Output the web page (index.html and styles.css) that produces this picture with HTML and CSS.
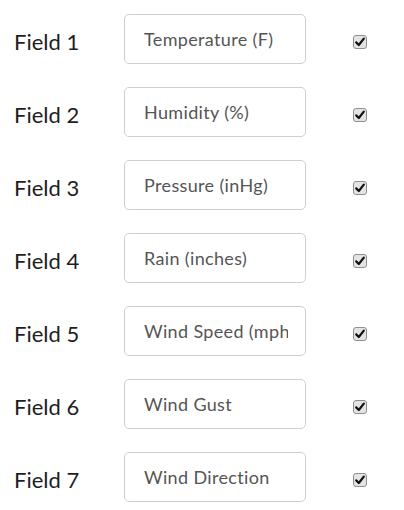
FILE: index.html
```html
<!DOCTYPE html>
<html>
<head>
<meta charset="utf-8">
<link rel="stylesheet" href="styles.css">
</head>
<body>
<form class="fields">
  <div class="row">
    <label class="label">Field 1</label>
    <div class="input"><span class="value">Temperature (F)</span></div>
    <span class="check"><svg viewBox="0 0 14 14" width="14" height="14"><rect x="0.5" y="0.5" width="13" height="13" rx="2.5" class="box"/><path d="M3.2 7.4 L5.8 10 L10.8 3.6" class="tick"/></svg></span>
  </div>
  <div class="row">
    <label class="label">Field 2</label>
    <div class="input"><span class="value">Humidity (%)</span></div>
    <span class="check"><svg viewBox="0 0 14 14" width="14" height="14"><rect x="0.5" y="0.5" width="13" height="13" rx="2.5" class="box"/><path d="M3.2 7.4 L5.8 10 L10.8 3.6" class="tick"/></svg></span>
  </div>
  <div class="row">
    <label class="label">Field 3</label>
    <div class="input"><span class="value">Pressure (inHg)</span></div>
    <span class="check"><svg viewBox="0 0 14 14" width="14" height="14"><rect x="0.5" y="0.5" width="13" height="13" rx="2.5" class="box"/><path d="M3.2 7.4 L5.8 10 L10.8 3.6" class="tick"/></svg></span>
  </div>
  <div class="row">
    <label class="label">Field 4</label>
    <div class="input"><span class="value">Rain (inches)</span></div>
    <span class="check"><svg viewBox="0 0 14 14" width="14" height="14"><rect x="0.5" y="0.5" width="13" height="13" rx="2.5" class="box"/><path d="M3.2 7.4 L5.8 10 L10.8 3.6" class="tick"/></svg></span>
  </div>
  <div class="row">
    <label class="label">Field 5</label>
    <div class="input"><span class="value">Wind Speed (mph)</span></div>
    <span class="check"><svg viewBox="0 0 14 14" width="14" height="14"><rect x="0.5" y="0.5" width="13" height="13" rx="2.5" class="box"/><path d="M3.2 7.4 L5.8 10 L10.8 3.6" class="tick"/></svg></span>
  </div>
  <div class="row">
    <label class="label">Field 6</label>
    <div class="input"><span class="value">Wind Gust</span></div>
    <span class="check"><svg viewBox="0 0 14 14" width="14" height="14"><rect x="0.5" y="0.5" width="13" height="13" rx="2.5" class="box"/><path d="M3.2 7.4 L5.8 10 L10.8 3.6" class="tick"/></svg></span>
  </div>
  <div class="row">
    <label class="label">Field 7</label>
    <div class="input"><span class="value">Wind Direction</span></div>
    <span class="check"><svg viewBox="0 0 14 14" width="14" height="14"><rect x="0.5" y="0.5" width="13" height="13" rx="2.5" class="box"/><path d="M3.2 7.4 L5.8 10 L10.8 3.6" class="tick"/></svg></span>
  </div>
</form>
</body>
</html>
```
FILE: styles.css
```css
html, body {
  margin: 0;
  padding: 0;
  background: #ffffff;
}
body {
  font-family: Lato, "Open Sans", sans-serif;
}
.fields {
  display: flex;
  flex-direction: column;
  gap: 23px;
  padding: 14px 0 0 14px;
}
.row {
  display: grid;
  grid-template-columns: 110px 182px 47px 14px;
  align-items: center;
  height: 50px;
}
.label {
  grid-column: 1;
  font-size: 22px;
  color: #1e1e1e;
  padding-top: 4px;
}
.input {
  grid-column: 2;
  box-sizing: border-box;
  height: 50px;
  border: 1px solid #cfcfcf;
  border-radius: 5px;
  padding: 0 17px 1px 19px;
  display: flex;
  align-items: center;
  font-size: 18px;
  letter-spacing: 0.35px;
  color: #555;
}
.value {
  display: block;
  white-space: nowrap;
  overflow: hidden;
  min-width: 0;
}
.check {
  grid-column: 4;
  display: flex;
  padding-top: 5px;
}
.box {
  fill: #e4e4e4;
  stroke: #8f8f8f;
  stroke-width: 1;
}
.tick {
  fill: none;
  stroke: #111;
  stroke-width: 2.2;
  stroke-linecap: round;
  stroke-linejoin: round;
}
```
